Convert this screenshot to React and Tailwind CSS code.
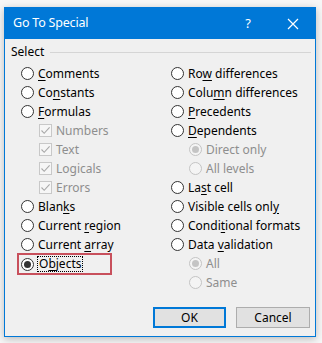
import React from 'react';

const Radio = ({ checked, disabled }) => (
  <span
    className={`flex h-[13px] w-[13px] shrink-0 items-center justify-center rounded-full border ${
      disabled ? 'border-[#c4c4c4] bg-[#f4f4f4]' : 'border-[#333333] bg-white'
    }`}
  >
    {checked && (
      <span className={`h-[7px] w-[7px] rounded-full ${disabled ? 'bg-[#c4c4c4]' : 'bg-[#333333]'}`} />
    )}
  </span>
);

const Check = () => (
  <span className="flex h-[13px] w-[13px] shrink-0 items-center justify-center border border-[#c8c8c8] bg-[#f6f6f6]">
    <svg width="11" height="11" viewBox="0 0 11 11" fill="none">
      <path d="M1.5 5.5 L4.2 8.3 L9.6 2.4" stroke="#a8a8a8" strokeWidth="1.1" />
    </svg>
  </span>
);

const U = ({ children }) => <span className="underline underline-offset-[2px] decoration-[1px]">{children}</span>;

const RadioRow = ({ children, checked, disabled, indent }) => (
  <div className={`flex h-[19px] items-center gap-[4px] ${indent ? 'pl-[18px]' : ''}`}>
    <Radio checked={checked} disabled={disabled} />
    <span className={disabled ? 'text-[#8e8e8e]' : 'text-black'}>{children}</span>
  </div>
);

const CheckRow = ({ children }) => (
  <div className="flex h-[19px] items-center gap-[4px] pl-[18px]">
    <Check />
    <span className="text-[#8e8e8e]">{children}</span>
  </div>
);

export default function App() {
  return (
    <div className="h-[343px] w-[322px] bg-[#f7f7f7] pl-[4px] pt-[7px]" style={{ fontFamily: '"Noto Sans", "Open Sans", sans-serif' }}>
      <div className="flex h-[330px] w-[312px] flex-col border border-[#0078d7] bg-[#f0f0f0] text-[12px] leading-none shadow-[0_2px_8px_rgba(0,0,0,0.25)]">
        {/* title bar */}
        <div className="flex h-[31px] shrink-0 items-center bg-[#0078d7] pl-[8px] text-white">
          <span className="text-[12.5px] tracking-[-0.2px]">Go To Special</span>
          <span className="ml-auto mr-[36px] text-[13px]">?</span>
          <svg width="12" height="12" viewBox="0 0 12 12" className="mr-[16px]">
            <path d="M1 1 L11 11 M11 1 L1 11" stroke="white" strokeWidth="1.2" />
          </svg>
        </div>

        {/* group header */}
        <div className="mt-[7px] flex items-center pl-[6px] pr-[4px]">
          <span className="text-black">Select</span>
          <span className="ml-[6px] h-px flex-1 bg-[#d5d5d5]" />
        </div>

        <div className="mt-[6px] flex pl-[16px]">
          <div className="w-[150px]">
            <RadioRow><U>C</U>omments</RadioRow>
            <RadioRow>Co<U>n</U>stants</RadioRow>
            <RadioRow><U>F</U>ormulas</RadioRow>
            <CheckRow>Numbers</CheckRow>
            <CheckRow>Text</CheckRow>
            <CheckRow>Logicals</CheckRow>
            <CheckRow>Errors</CheckRow>
            <RadioRow>Blan<U>k</U>s</RadioRow>
            <RadioRow>Current <U>r</U>egion</RadioRow>
            <RadioRow>Current <U>a</U>rray</RadioRow>
            <div className="-ml-[4px] mt-[-1px] w-[95px] border-2 border-[#c8505c] pl-[2px]">
              <div className="flex h-[18px] items-center gap-[3px]">
                <Radio checked />
                <span className="border border-dotted border-black px-px leading-[14px] text-black">O<U>b</U>jects</span>
              </div>
            </div>
          </div>
          <div className="flex-1">
            <RadioRow>Ro<U>w</U> differences</RadioRow>
            <RadioRow>Colu<U>m</U>n differences</RadioRow>
            <RadioRow><U>P</U>recedents</RadioRow>
            <RadioRow><U>D</U>ependents</RadioRow>
            <RadioRow indent disabled checked>Direct only</RadioRow>
            <RadioRow indent disabled>All levels</RadioRow>
            <RadioRow>La<U>s</U>t cell</RadioRow>
            <RadioRow>Visible cells onl<U>y</U></RadioRow>
            <RadioRow>Condi<U>t</U>ional formats</RadioRow>
            <RadioRow>Data <U>v</U>alidation</RadioRow>
            <RadioRow indent disabled checked>All</RadioRow>
            <RadioRow indent disabled>Same</RadioRow>
          </div>
        </div>

        <div className="mt-auto mb-[8px] flex justify-end gap-[10px] pr-[5px]">
          <button className="flex h-[21px] w-[73px] items-center justify-center border-2 border-[#0078d7] bg-[#e1e1e1] text-black">OK</button>
          <button className="flex h-[21px] w-[74px] items-center justify-center border border-[#adadad] bg-[#e1e1e1] text-black">Cancel</button>
        </div>
      </div>
    </div>
  );
}
